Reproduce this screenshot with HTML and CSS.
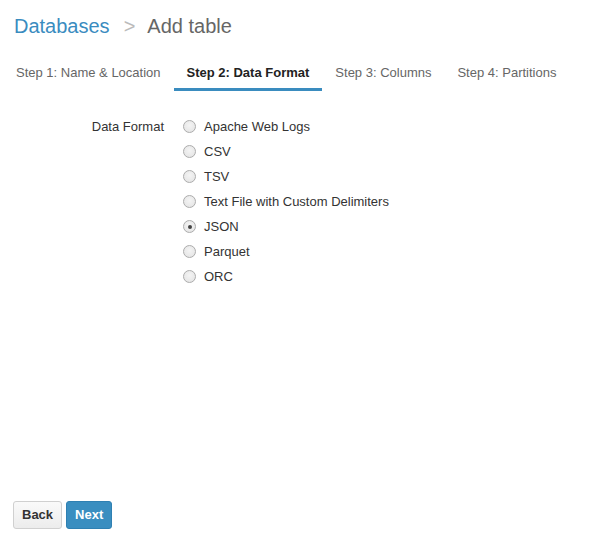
FILE: index.html
```html
<!DOCTYPE html>
<html>
<head>
<meta charset="utf-8">
<title>Add table</title>
<link rel="stylesheet" href="styles.css">
</head>
<body>
<div class="page">
  <h1 class="crumbs"><a class="crumb-link" href="#">Databases</a><span class="crumb-sep">&gt;</span><span class="crumb-current">Add table</span></h1>
  <nav class="tabs">
    <a class="tab" href="#">Step 1: Name &amp; Location</a>
    <a class="tab active" href="#">Step 2: Data Format</a>
    <a class="tab" href="#">Step 3: Columns</a>
    <a class="tab" href="#">Step 4: Partitions</a>
  </nav>
  <form class="form">
    <div class="field-label">Data Format</div>
    <div class="options">
      <label class="option"><input type="radio" name="fmt" class="radio"><span>Apache Web Logs</span></label>
      <label class="option"><input type="radio" name="fmt" class="radio"><span>CSV</span></label>
      <label class="option"><input type="radio" name="fmt" class="radio"><span>TSV</span></label>
      <label class="option"><input type="radio" name="fmt" class="radio"><span>Text File with Custom Delimiters</span></label>
      <label class="option"><input type="radio" name="fmt" class="radio" checked><span>JSON</span></label>
      <label class="option"><input type="radio" name="fmt" class="radio"><span>Parquet</span></label>
      <label class="option"><input type="radio" name="fmt" class="radio"><span>ORC</span></label>
    </div>
  </form>
  <div class="footer">
    <button class="btn btn-default" type="button">Back</button>
    <button class="btn btn-primary" type="button">Next</button>
  </div>
</div>
</body>
</html>
```
FILE: styles.css
```css
html, body {
  margin: 0;
  padding: 0;
  background: #fff;
}
body {
  font-family: "Liberation Sans", Arial, sans-serif;
  color: #333;
}
.page {
  height: 550px;
  box-sizing: border-box;
  display: flex;
  flex-direction: column;
  padding-top: 14px;
}
.crumbs {
  margin: 0 0 0 14px;
  font-size: 20px;
  line-height: 24px;
  font-weight: normal;
  display: flex;
}
.crumb-link {
  color: #3a8cbf;
  text-decoration: none;
}
.crumb-sep {
  color: #bbb;
  margin: 0 12px 0 14px;
}
.crumb-current {
  color: #666;
}
.tabs {
  display: flex;
  margin-top: 16px;
  padding-left: 3px;
}
.tab {
  font-size: 13px;
  line-height: 18px;
  padding: 10px 13px 6px;
  color: #666;
  text-decoration: none;
  border-bottom: 3px solid transparent;
}
.tab.active {
  color: #222;
  font-weight: bold;
  border-bottom-color: #3a8cbf;
}
.form {
  margin: 23px 0 0 0;
  display: flex;
  font-size: 13px;
}
.field-label {
  width: 164px;
  text-align: right;
  line-height: 25px;
  color: #333;
}
.options {
  display: flex;
  flex-direction: column;
}
.option {
  display: flex;
  align-items: center;
  height: 25px;
  line-height: 25px;
  color: #333;
}
.radio {
  appearance: none;
  -webkit-appearance: none;
  width: 13px;
  height: 13px;
  margin: 0 8px 0 19px;
  border-radius: 50%;
  border: 1px solid #acacac;
  background: radial-gradient(circle at 50% 40%, #f4f4f4 0%, #e2e2e2 100%);
  box-sizing: border-box;
  position: relative;
}
.radio:checked::after {
  content: "";
  position: absolute;
  left: 3.5px;
  top: 3.5px;
  width: 4px;
  height: 4px;
  border-radius: 50%;
  background: #444;
}
.footer {
  margin-top: auto;
  padding: 0 0 21px 13px;
  display: flex;
  gap: 4px;
}
.btn {
  font-family: "Liberation Sans", Arial, sans-serif;
  font-size: 13px;
  font-weight: bold;
  line-height: 18px;
  padding: 4px 8px;
  border-radius: 3px;
  border: 1px solid #ccc;
  cursor: pointer;
}
.btn-default {
  background: linear-gradient(#fafafa, #ececec);
  color: #333;
  border-color: #d0d0d0;
}
.btn-primary {
  background: #3a8ec0;
  color: #fff;
  border-color: #2f80b2;
}
```
